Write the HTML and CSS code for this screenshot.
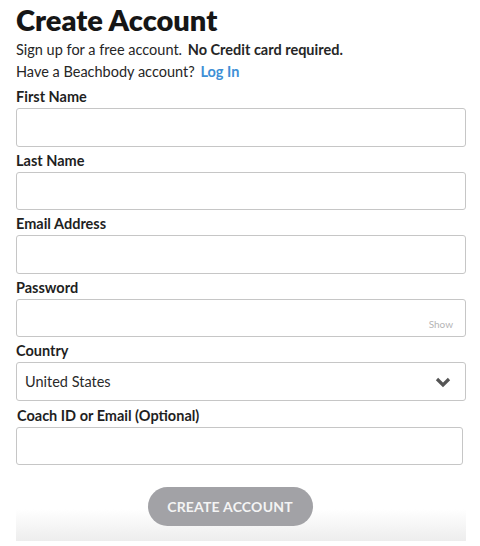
FILE: index.html
```html
<!DOCTYPE html>
<html lang="en">
<head>
<meta charset="utf-8">
<title>Create Account</title>
<link rel="stylesheet" href="styles.css">
</head>
<body>
<main class="page">
  <h1 class="title">Create Account</h1>
  <p class="intro intro-first">Sign up for a free account. <b class="strong">No Credit card required.</b></p>
  <p class="intro">Have a Beachbody account? <a class="link" href="#">Log In</a></p>

  <form class="form">
    <div class="field">
      <label class="label">First Name</label>
      <div class="box"></div>
    </div>
    <div class="field">
      <label class="label">Last Name</label>
      <div class="box"></div>
    </div>
    <div class="field">
      <label class="label">Email Address</label>
      <div class="box"></div>
    </div>
    <div class="field">
      <label class="label">Password</label>
      <div class="box box-password"><span class="show">Show</span></div>
    </div>
    <div class="field">
      <label class="label">Country</label>
      <div class="box box-select">
        <span class="value">United States</span>
        <svg class="chevron" width="16" height="12" viewBox="0 0 16 12"><path d="M2 3 L8 9 L14 3" fill="none" stroke="#555" stroke-width="3.2" stroke-linecap="butt" stroke-linejoin="miter"/></svg>
      </div>
    </div>
    <div class="field field-coach">
      <label class="label">Coach ID or Email (Optional)</label>
      <div class="box box-coach"></div>
    </div>
    <div class="actions">
      <button class="submit" type="button">CREATE ACCOUNT</button>
    </div>
  </form>
</main>
</body>
</html>
```
FILE: styles.css
```css
* { box-sizing: border-box; }
html, body { margin: 0; padding: 0; background: #fff; }
body {
  font-family: Lato, "Open Sans", sans-serif;
  color: #1f1f1f;
}
.page {
  padding: 0 15px 0 16px;
  width: 481px;
}
.title {
  margin: 2px 0 0;
  font-size: 29px;
  line-height: 36px;
  font-weight: 800;
  color: #161616;
}
.intro {
  margin: 0;
  font-size: 14.5px;
  line-height: 22px;
  color: #262626;
}
.intro-first { margin-top: 1px; }
.strong { font-weight: 700; margin-left: 2px; }
.link { color: #3d8fd6; text-decoration: none; font-weight: 700; margin-left: 2px; }
.form { display: flex; flex-direction: column; margin-top: 5px; }
.field { display: flex; flex-direction: column; }
.label {
  font-size: 14.5px;
  line-height: 18px;
  font-weight: 700;
  color: #1f1f1f;
  margin-bottom: 2px;
}
.box {
  height: 38.5px;
  border: 1.5px solid #c6c6c6;
  border-radius: 3px;
  background: #fff;
  margin-bottom: 5px;
  display: flex;
  align-items: center;
}
.box-password { justify-content: flex-end; align-items: flex-end; padding: 0 12px 6px 0; }
.show { font-size: 10px; color: #b5b5b5; line-height: 12px; }
.box-select { padding: 0 14px 0 8px; justify-content: space-between; }
.value { font-size: 14.5px; color: #2a2a2a; }
.chevron { display: block; margin-top: 1px; }
.field-coach .label { margin-left: 1px; margin-top: 1px; }
.box-coach { margin-right: 3px; margin-bottom: 0; }
.actions {
  margin-top: 22px;
  padding-bottom: 15px;
  display: flex;
  justify-content: center;
  background: linear-gradient(#fff 0, #fff 22px, #ededed 100%);
}
.submit {
  width: 165px;
  height: 39px;
  border: 0;
  border-radius: 20px;
  background: #a2a2a6;
  color: #f4f4f4;
  font-family: Lato, sans-serif;
  font-weight: 700;
  font-size: 14px;
  letter-spacing: 0.2px;
  padding: 0;
  margin-right: 22px;
}
```
